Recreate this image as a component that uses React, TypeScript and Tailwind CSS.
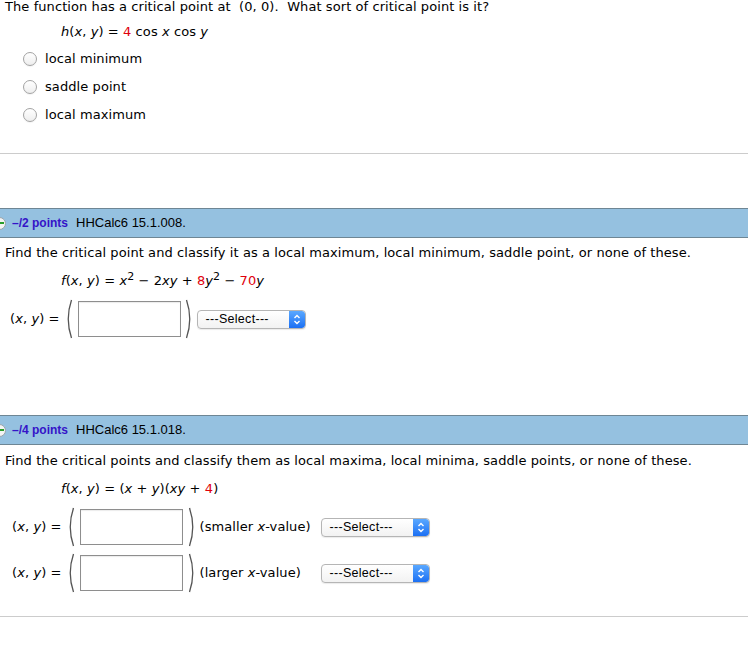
import React from "react";

const Red = ({ children }: { children: React.ReactNode }) => (
  <span className="text-[#e0000b]">{children}</span>
);

const V = ({ children }: { children: React.ReactNode }) => <i>{children}</i>;

// stretched bracket, drawn like the math renderer does
const Paren = ({ side }: { side: "l" | "r" }) => (
  <svg width="8" height="40" viewBox="0 0 8 40" fill="none">
    <path
      d={side === "l" ? "M6.5 1 Q0 20 6.5 39" : "M1.5 1 Q8 20 1.5 39"}
      stroke="#555"
      strokeWidth="1.3"
    />
  </svg>
);

const AnswerBox = () => (
  <div className="w-[103px] h-[36px] border border-[#8e8e8e] bg-white shadow-[inset_0_1px_1px_rgba(0,0,0,0.08)]" />
);

const Select = ({ w = 109 }: { w?: number }) => (
  <div
    className="h-[19px] flex items-stretch rounded-[4px] border border-[#b5b5b5] bg-gradient-to-b from-white to-[#f2f2f2] shadow-[0_1px_1px_rgba(0,0,0,0.08)] overflow-hidden"
    style={{ width: w }}
  >
    <span className="flex-1 pl-[8px] flex items-center font-['Liberation_Sans'] text-[12.5px] tracking-[0.3px] text-black">
      ---Select---
    </span>
    <span className="w-[16px] flex items-center justify-center bg-gradient-to-b from-[#5aa8ff] to-[#1b6ff3] rounded-r-[3px]">
      <svg width="8" height="11" viewBox="0 0 8 11" fill="none">
        <path d="M1.5 4 L4 1.5 L6.5 4" stroke="white" strokeWidth="1.4" />
        <path d="M1.5 7 L4 9.5 L6.5 7" stroke="white" strokeWidth="1.4" />
      </svg>
    </span>
  </div>
);

const Radio = ({ label }: { label: string }) => (
  <div className="h-[28px] flex items-center pl-[23px]">
    <div className="w-[14px] h-[14px] rounded-full border border-[#a3a3a3] bg-gradient-to-b from-white to-[#eeeeee] shadow-[0_1px_1px_rgba(0,0,0,0.05)]" />
    <span className="ml-[8px]">{label}</span>
  </div>
);

const Header = ({ pts, code }: { pts: string; code: string }) => (
  <div className="h-[30px] border-y border-[#6e8694] bg-[#95c1e0] flex items-center tracking-normal">
    <div className="w-[13px] h-[13px] -ml-[7px] rounded-full border border-[#9aa4aa] bg-[#f4f4f4] flex items-center justify-center">
      <div className="w-[5px] h-[2px] bg-[#2a9d2a] ml-[4px]" />
    </div>
    <span className="ml-[6px] font-['Liberation_Sans'] font-bold text-[12px] text-[#3414c8]">
      {pts}
    </span>
    <span className="ml-[8px] font-['Liberation_Sans'] text-[13px] text-black">{code}</span>
  </div>
);

export default function App() {
  return (
    <div className="w-[748px] h-[651px] overflow-hidden bg-white font-['DejaVu_Sans',sans-serif] text-[13px] tracking-[0.08px] text-black">
      <div className="-mt-[1px] px-[5px] h-[16px] leading-[16px] whitespace-nowrap">
        The function has a critical point at&nbsp; (0, 0).&nbsp; What sort of critical point is it?
      </div>
      <div className="mt-[9px] pl-[61px] h-[16px] leading-[16px] whitespace-nowrap">
        <V>h</V>(<V>x</V>, <V>y</V>) = <Red>4</Red> cos <V>x</V> cos <V>y</V>
      </div>
      <div className="mt-[5px]">
        <Radio label="local minimum" />
        <Radio label="saddle point" />
        <Radio label="local maximum" />
      </div>
      <div className="mt-[24px] border-t border-[#cccccc]" />

      <div className="mt-[54px]">
        <Header pts="–/2 points" code="HHCalc6 15.1.008." />
      </div>
      <div className="mt-[7px] px-[5px] h-[16px] leading-[16px] whitespace-nowrap">
        Find the critical point and classify it as a local maximum, local minimum, saddle point, or none of these.
      </div>
      <div className="mt-[12px] pl-[61px] h-[16px] leading-[16px] whitespace-nowrap">
        <V>f</V>(<V>x</V>, <V>y</V>) = <V>x</V>
        <sup className="text-[11px]">2</sup> − 2<V>xy</V> + <Red>8</Red>
        <V>y</V>
        <sup className="text-[11px]">2</sup> − <Red>70</Red>
        <V>y</V>
      </div>
      <div className="mt-[12px] h-[36px] flex items-center pl-[10px]">
        <span className="whitespace-nowrap">
          (<V>x</V>, <V>y</V>) =
        </span>
        <div className="ml-[5px] flex">
          <Paren side="l" />
        </div>
        <div className="ml-[5px]">
          <AnswerBox />
        </div>
        <div className="ml-[4px] flex">
          <Paren side="r" />
        </div>
        <div className="ml-[4px]">
          <Select />
        </div>
      </div>

      <div className="mt-[78px]">
        <Header pts="–/4 points" code="HHCalc6 15.1.018." />
      </div>
      <div className="mt-[8px] px-[5px] h-[16px] leading-[16px] whitespace-nowrap">
        Find the critical points and classify them as local maxima, local minima, saddle points, or none of these.
      </div>
      <div className="mt-[12px] pl-[61px] h-[16px] leading-[16px] whitespace-nowrap">
        <V>f</V>(<V>x</V>, <V>y</V>) = (<V>x</V> + <V>y</V>)(<V>xy</V> + <Red>4</Red>)
      </div>
      <div className="mt-[12px] h-[36px] flex items-center pl-[12px]">
        <span className="whitespace-nowrap">
          (<V>x</V>, <V>y</V>) =
        </span>
        <div className="ml-[5px] flex">
          <Paren side="l" />
        </div>
        <div className="ml-[5px]">
          <AnswerBox />
        </div>
        <div className="ml-[5px] flex">
          <Paren side="r" />
        </div>
        <span className="ml-[4px] w-[121px] whitespace-nowrap">
          (smaller <V>x</V>-value)
        </span>
        <Select />
      </div>
      <div className="mt-[10px] h-[36px] flex items-center pl-[12px]">
        <span className="whitespace-nowrap">
          (<V>x</V>, <V>y</V>) =
        </span>
        <div className="ml-[5px] flex">
          <Paren side="l" />
        </div>
        <div className="ml-[5px]">
          <AnswerBox />
        </div>
        <div className="ml-[5px] flex">
          <Paren side="r" />
        </div>
        <span className="ml-[4px] w-[121px] whitespace-nowrap">
          (larger <V>x</V>-value)
        </span>
        <Select />
      </div>
      <div className="mt-[25px] border-t border-[#cccccc]" />
    </div>
  );
}
